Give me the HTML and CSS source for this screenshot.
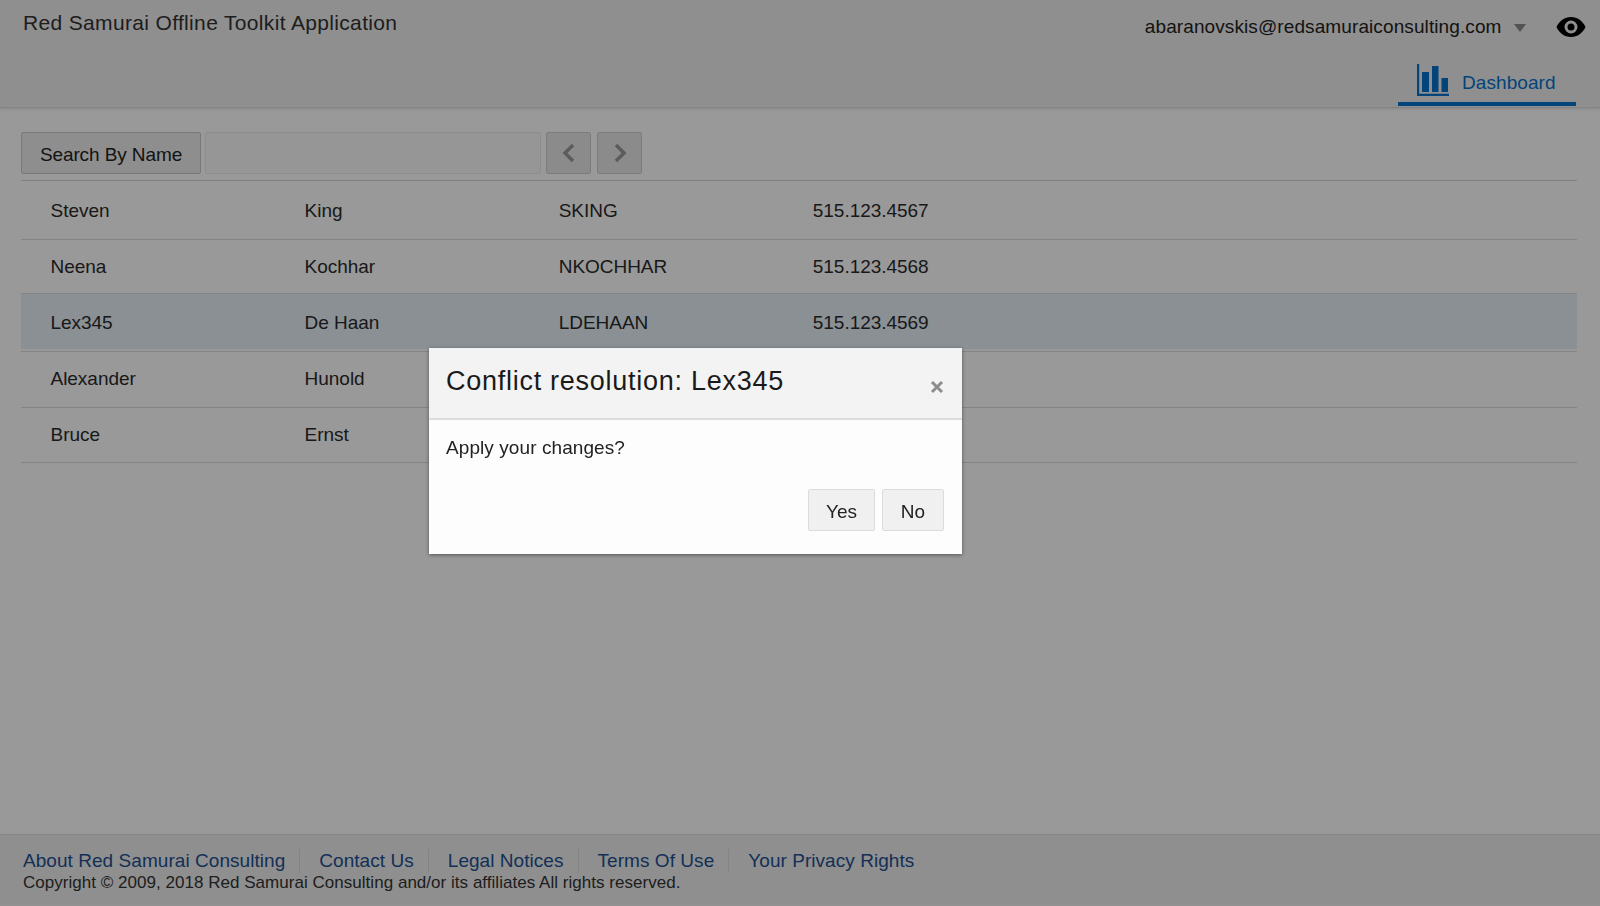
FILE: index.html
```html
<!DOCTYPE html>
<html lang="en">
<head>
<meta charset="utf-8">
<title>Red Samurai Offline Toolkit Application</title>
<link rel="stylesheet" href="styles.css">
</head>
<body>
<div class="app">
  <header class="header">
    <div class="header-top">
      <div class="app-title">Red Samurai Offline Toolkit Application</div>
      <div class="user">
        <span class="user-name">abaranovskis@redsamuraiconsulting.com</span>
        <svg class="caret" width="12" height="8" viewBox="0 0 12 8"><path d="M0 0h12L6 8z" fill="#8a8a8a"/></svg>
        <svg class="eye" width="30" height="20" viewBox="0 0 30 20"><path fill-rule="evenodd" d="M15 0C8.500 0 3.200 4 .5 10c2.700 6 8 10 14.500 10s11.800-4 14.500-10C26.800 4 21.500 0 15 0zm0 16.500a6.500 6.500 0 1 1 0-13 6.500 6.500 0 0 1 0 13zM15 6.500a3.500 3.500 0 1 0 0 7 3.500 3.500 0 0 0 0-7z" fill="#000"/></svg>
      </div>
    </div>
    <nav class="tabs">
      <a class="tab">
        <svg class="tab-icon" width="32" height="32" viewBox="0 0 32 32"><path d="M1 0v31h31" fill="none" stroke="#0572ce" stroke-width="2.400"/><path d="M5 8h7v20H5zM15 2h6.500v26H15zM24.500 14H31v14h-6.500z" fill="#0572ce"/></svg>
        <span>Dashboard</span>
      </a>
    </nav>
  </header>

  <main class="main">
    <div class="toolbar">
      <button class="btn btn-search">Search By Name</button>
      <input class="search-input" type="text">
      <button class="btn btn-nav"><svg width="16" height="20" viewBox="0 0 16 20"><path d="M12 2 4 10l8 8" fill="none" stroke="#9a9a9a" stroke-width="3.500"/></svg></button>
      <button class="btn btn-nav"><svg width="16" height="20" viewBox="0 0 16 20"><path d="m4 2 8 8-8 8" fill="none" stroke="#9a9a9a" stroke-width="3.500"/></svg></button>
    </div>
    <div class="list">
      <div class="row row-first"><span>Steven</span><span>King</span><span>SKING</span><span>515.123.4567</span></div>
      <div class="row row-short"><span>Neena</span><span>Kochhar</span><span>NKOCHHAR</span><span>515.123.4568</span></div>
      <div class="row row-selected"><span>Lex345</span><span>De Haan</span><span>LDEHAAN</span><span>515.123.4569</span></div>
      <div class="row"><span>Alexander</span><span>Hunold</span></div>
      <div class="row row-last"><span>Bruce</span><span>Ernst</span></div>
    </div>
  </main>

  <footer class="footer">
    <div class="footer-links">
      <a>About Red Samurai Consulting</a><a>Contact Us</a><a>Legal Notices</a><a>Terms Of Use</a><a>Your Privacy Rights</a>
    </div>
    <div class="copyright">Copyright © 2009, 2018 Red Samurai Consulting and/or its affiliates All rights reserved.</div>
  </footer>
</div>

<div class="scrim"></div>
<div class="dialog">
  <div class="dialog-header">
    <div class="dialog-title">Conflict resolution: Lex345</div>
    <svg class="dialog-close" width="14" height="14" viewBox="0 0 14 14"><path d="m2 2 10 10M12 2 2 12" stroke="#8d8d8d" stroke-width="3"/></svg>
  </div>
  <div class="dialog-body">Apply your changes?</div>
  <div class="dialog-footer">
    <button class="btn dialog-btn yes">Yes</button>
    <button class="btn dialog-btn no">No</button>
  </div>
</div>
</body>
</html>
```

FILE: styles.css
```css
* { box-sizing: border-box; }
html, body { margin: 0; height: 100%; overflow: hidden; }
body {
  background: #f2f2f2;
  color: #333;
  font-family: "Liberation Sans", Arial, sans-serif;
}
.app { display: flex; flex-direction: column; height: 904px; background: #fff; }

.header {
  height: 108px;
  background: #eee;
  border-bottom: 1px solid #dcdcdc;
  box-shadow: 0 1px 3px rgba(0,0,0,.12);
  display: flex;
  flex-direction: column;
}
.header-top { display: flex; justify-content: space-between; height: 56px; padding: 0 14.500px 0 23px; }
.app-title { font-size: 21px; letter-spacing: .34px; line-height: 24px; margin-top: 11px; color: #333; }
.user { display: flex; align-items: center; height: 54px; }
.user-name { font-size: 19px; letter-spacing: .1px; color: #222; }
.caret { margin-left: 12px; margin-top: 2px; }
.eye { margin-left: 30px; }

.tabs { display: flex; justify-content: flex-end; padding-right: 24px; }
.tab {
  width: 178px;
  height: 50px;
  display: flex;
  align-items: flex-start;
  padding-left: 19px;
  color: #0572ce;
  font-size: 19px;
  letter-spacing: .08px;
  border-bottom: 4px solid #0572ce;
}
.tab-icon { margin-top: 8px; }
.tab span { margin-left: 13px; margin-top: 16px; line-height: 22px; }

.main { flex: 1; padding: 24px 23px 0 21px; }
.toolbar {
  display: flex;
  height: 49px;
  padding-bottom: 6px;
  border-bottom: 1px solid #d6d6d6;
}
.btn {
  font-family: inherit;
  font-size: 19px;
  color: #222;
  background: #eee;
  border: 1px solid #cfcfcf;
  border-radius: 2px;
  padding: 3px 0 0;
  height: 42px;
}
.btn-search { width: 180px; letter-spacing: -.1px; background: #ededed; border-color: #c8c8c8; }
.search-input {
  width: 336px;
  height: 42px;
  margin-left: 4px;
  background: #fbfbfb;
  border: 1px solid #ececec;
  border-radius: 2px;
}
.btn-nav {
  width: 45px;
  margin-left: 5px;
  display: flex;
  align-items: center;
  justify-content: center;
  background: #e8e8e8;
  padding: 0;
}
.btn-nav:last-child { margin-left: 6px; }

.row {
  display: grid;
  grid-template-columns: repeat(4, 254.100px);
  align-items: center;
  height: 56px;
  padding: 0 0 2px 29.500px;
  border-bottom: 1px solid #dcdcdc;
  font-size: 19px;
  letter-spacing: -.03px;
  color: #2b2b2b;
}
.row-first { height: 59px; padding: 1px 0 0 29.500px; }
.row-short { height: 54px; padding-bottom: 0; }
.row-last { height: 55px; padding-bottom: 0; }
.row-selected {
  height: 58px;
  padding-bottom: 0;
  background: linear-gradient(#e6f0f7, #e6f0f7) no-repeat top / 100% 55px;
}

.footer {
  height: 70px;
  background: #eee;
  border-top: 1px solid #dedede;
  padding: 14px 23px 0;
}
.footer-links { display: flex; height: 24px; align-items: center; }
.footer-links a {
  font-size: 19px;
  letter-spacing: .05px;
  color: #235092;
  padding-right: 14px;
  margin-right: 19px;
  border-right: 1px solid #dcdcdc;
  line-height: 24px;
}
.footer-links a:last-child { border-right: 0; }
.copyright { font-size: 17px; letter-spacing: .03px; line-height: 18px; margin-top: 1px; color: #333; }

.scrim { position: fixed; inset: 0; background: rgba(0,0,0,.4); }
.dialog {
  position: fixed;
  left: 429px;
  top: 348px;
  width: 533px;
  height: 206px;
  background: #fdfdfd;
  box-shadow: 0 1px 4px rgba(0,0,0,.45);
  display: flex;
  flex-direction: column;
}
.dialog-header {
  height: 72px;
  background: #f3f3f3;
  border-bottom: 2px solid #dcdcdc;
  display: flex;
  justify-content: space-between;
  padding: 17px 18.500px 0 17px;
}
.dialog-title { font-size: 27px; letter-spacing: .73px; line-height: 32px; color: #1a1a1a; }
.dialog-close { margin-top: 15px; }
.dialog-body { font-size: 19px; letter-spacing: .08px; line-height: 22px; padding: 17px 17px 0; color: #222; }
.dialog-footer { display: flex; justify-content: flex-end; gap: 7px; padding: 30px 18px 0 0; }
.dialog-btn { background: #f0f0f0; border-color: #dcdcdc; padding-top: 3px; }
.yes { width: 67px; }
.no { width: 62px; }
```
